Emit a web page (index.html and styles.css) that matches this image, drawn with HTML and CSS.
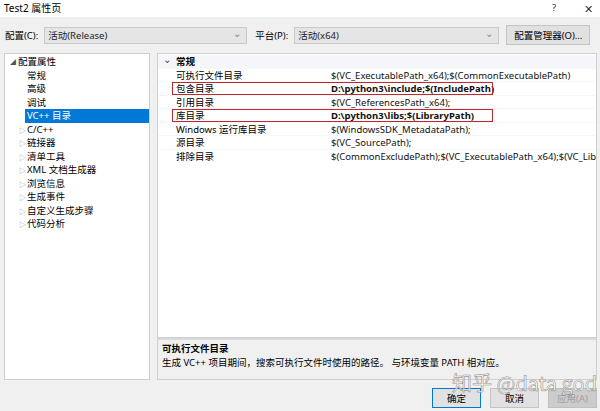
FILE: index.html
```html
<!DOCTYPE html>
<html lang="zh-CN">
<head>
    <meta charset="UTF-8">
    <title>Test2 属性页</title>
    <link rel="stylesheet" href="styles.css">
</head>
<body>

<div class="window">
    <div class="titlebar">
        <span class="title">Test2 属性页</span>
        <span class="title-btns"><span class="help">?</span><span class="close">✕</span></span>
    </div>

    <div class="toolbar">
        <label>配置(C):</label>
        <div class="combo combo-config">活动(Release)<span class="chev">⌄</span></div>
        <label>平台(P):</label>
        <div class="combo combo-platform">活动(x64)<span class="chev">⌄</span></div>
        <button class="btn btn-manager">配置管理器(O)...</button>
    </div>

    <div class="main">
        <ul class="tree">
            <li class="root"><span class="arrow">◢</span>配置属性</li>
            <li class="leaf">常规</li>
            <li class="leaf">高级</li>
            <li class="leaf">调试</li>
            <li class="leaf selected">VC++ 目录</li>
            <li class="node"><span class="arrow">▷</span>C/C++</li>
            <li class="node"><span class="arrow">▷</span>链接器</li>
            <li class="node"><span class="arrow">▷</span>清单工具</li>
            <li class="node"><span class="arrow">▷</span>XML 文档生成器</li>
            <li class="node"><span class="arrow">▷</span>浏览信息</li>
            <li class="node"><span class="arrow">▷</span>生成事件</li>
            <li class="node"><span class="arrow">▷</span>自定义生成步骤</li>
            <li class="node"><span class="arrow">▷</span>代码分析</li>
        </ul>

        <div class="right">
            <div class="grid">
                <div class="grid-head"><span class="chev-down">⌄</span>常规</div>
                <div class="row"><span class="name">可执行文件目录</span><span class="value">$(VC_ExecutablePath_x64);$(CommonExecutablePath)</span></div>
                <div class="row marked"><span class="name">包含目录</span><span class="value bold">D:\python3\include;$(IncludePath)</span></div>
                <div class="row"><span class="name">引用目录</span><span class="value">$(VC_ReferencesPath_x64);</span></div>
                <div class="row marked"><span class="name">库目录</span><span class="value bold">D:\python3\libs;$(LibraryPath)</span></div>
                <div class="row"><span class="name">Windows 运行库目录</span><span class="value">$(WindowsSDK_MetadataPath);</span></div>
                <div class="row"><span class="name">源目录</span><span class="value">$(VC_SourcePath);</span></div>
                <div class="row"><span class="name">排除目录</span><span class="value">$(CommonExcludePath);$(VC_ExecutablePath_x64);$(VC_Lib</span></div>
            </div>
            <div class="desc">
                <div class="desc-title">可执行文件目录</div>
                <div class="desc-text">生成 VC++ 项目期间，搜索可执行文件时使用的路径。 与环境变量 PATH 相对应。</div>
            </div>
        </div>
    </div>

    <div class="footer">
        <button class="btn btn-ok">确定</button>
        <button class="btn">取消</button>
        <button class="btn disabled">应用(A)</button>
        <span class="watermark">知乎 @data god</span>
    </div>
</div>

</body>
</html>
```

FILE: styles.css
```css
body {
    margin: 0;
    padding: 0;
    background-color: #f0f0f0;
    font-family: "Noto Sans", "Noto Sans CJK SC", sans-serif;
    font-size: 9.5px;
    color: #000;
}
.window {
    position: relative;
    width: 600px;
    height: 411px;
    overflow: hidden;
}
.titlebar {
    height: 17px;
    background-color: #fff;
    display: flex;
    justify-content: space-between;
    align-items: center;
    padding: 0 4px;
}
.title {
    font-size: 10px;
    margin-top: -2px;
}
.title-btns {
    display: flex;
    gap: 28px;
    margin-right: 3px;
    color: #333;
}
.close {
    font-size: 11px;
}
.toolbar {
    display: flex;
    align-items: center;
    height: 20px;
    padding: 8px 4px 0 5px;
}
.toolbar label {
    margin-right: 6px;
}
.combo {
    position: relative;
    box-sizing: border-box;
    height: 17px;
    line-height: 15px;
    background-color: #e5e5e5;
    border: 1px solid #c9c9c9;
    padding-left: 3px;
    color: #222;
}
.combo-config {
    width: 203px;
    margin-right: 8px;
}
.combo-platform {
    width: 205px;
    margin-right: 7px;
}
.chev {
    position: absolute;
    right: 5px;
    top: -2px;
    color: #888;
    font-size: 10px;
}
.btn {
    box-sizing: border-box;
    font-family: inherit;
    font-size: 9.5px;
    background-color: #e1e1e1;
    border: 1px solid #c4c4c4;
    padding: 0;
    color: #000;
}
.btn-manager {
    width: 84px;
    height: 20px;
}
.main {
    display: flex;
    padding: 8px 3px 0 4px;
    height: 327px;
}
.tree {
    box-sizing: border-box;
    flex: 0 0 146px;
    margin: 0 7px 0 0;
    padding: 1px 0 0 0;
    list-style: none;
    background-color: #fff;
    border: 1px solid #cfcfcf;
}
.tree li {
    height: 13.5px;
    line-height: 13.5px;
    white-space: nowrap;
}
.tree .root {
    padding-left: 5px;
}
.tree .leaf {
    padding-left: 22px;
}
.tree .node {
    padding-left: 14px;
}
.tree .arrow {
    display: inline-block;
    width: 8px;
    font-size: 6px;
    color: #555;
    vertical-align: 1px;
}
.tree .node .arrow {
    color: #999;
    width: 8px;
    font-size: 7px;
    vertical-align: 0;
}
.tree .selected {
    margin-left: 20px;
    padding-left: 2px;
    background-color: #0078d7;
    color: #fff;
}
.right {
    flex: 1;
    min-width: 0;
    display: flex;
    flex-direction: column;
}
.grid {
    box-sizing: border-box;
    height: 285px;
    background-color: #fff;
    border: 1px solid #cfcfcf;
    padding-top: 1px;
    overflow: hidden;
}
.grid-head {
    height: 13.5px;
    line-height: 13.5px;
    background-color: #f4f6f9;
    font-weight: bold;
    padding-left: 5px;
}
.chev-down {
    display: inline-block;
    width: 13px;
    font-weight: normal;
    color: #444;
    position: relative;
    top: -2px;
}
.row {
    position: relative;
    height: 13.5px;
    line-height: 13.5px;
    display: flex;
    white-space: nowrap;
    border-top: 1px solid #f7f7f7;
    margin-top: -1px;
}
.row .name {
    width: 155px;
    padding-left: 18px;
    flex-shrink: 0;
}
.row .value {
    color: #111;
}
.row .bold {
    font-weight: bold;
}
.row.marked {
    z-index: 1;
}
.row.marked::after {
    content: "";
    position: absolute;
    left: 14px;
    top: 0;
    width: 319px;
    height: 11px;
    border: 1.5px solid #c2272d;
}
.desc {
    box-sizing: border-box;
    height: 42px;
    border: 1px solid #cfcfcf;
    border-top: 2px solid #d9d9d9;
    padding: 2px 4px;
    line-height: 13.5px;
}
.desc-title {
    font-weight: bold;
}
.footer {
    display: flex;
    justify-content: flex-end;
    gap: 9px;
    padding: 8px 3px 0 0;
}
.footer .btn {
    width: 49px;
    height: 20px;
}
.btn-ok {
    border: 1px solid #0078d7;
}
.btn.disabled {
    background-color: #cccccc;
    border-color: #bfbfbf;
    color: #a0a0a0;
}
.watermark {
    position: absolute;
    left: 452px;
    top: 368px;
    font-family: "Noto Sans CJK SC", sans-serif;
    font-size: 20px;
    color: rgba(255, 255, 255, 0.75);
    -webkit-text-stroke: 0.6px rgba(120, 120, 120, 0.8);
    pointer-events: none;
    white-space: nowrap;
}
```
